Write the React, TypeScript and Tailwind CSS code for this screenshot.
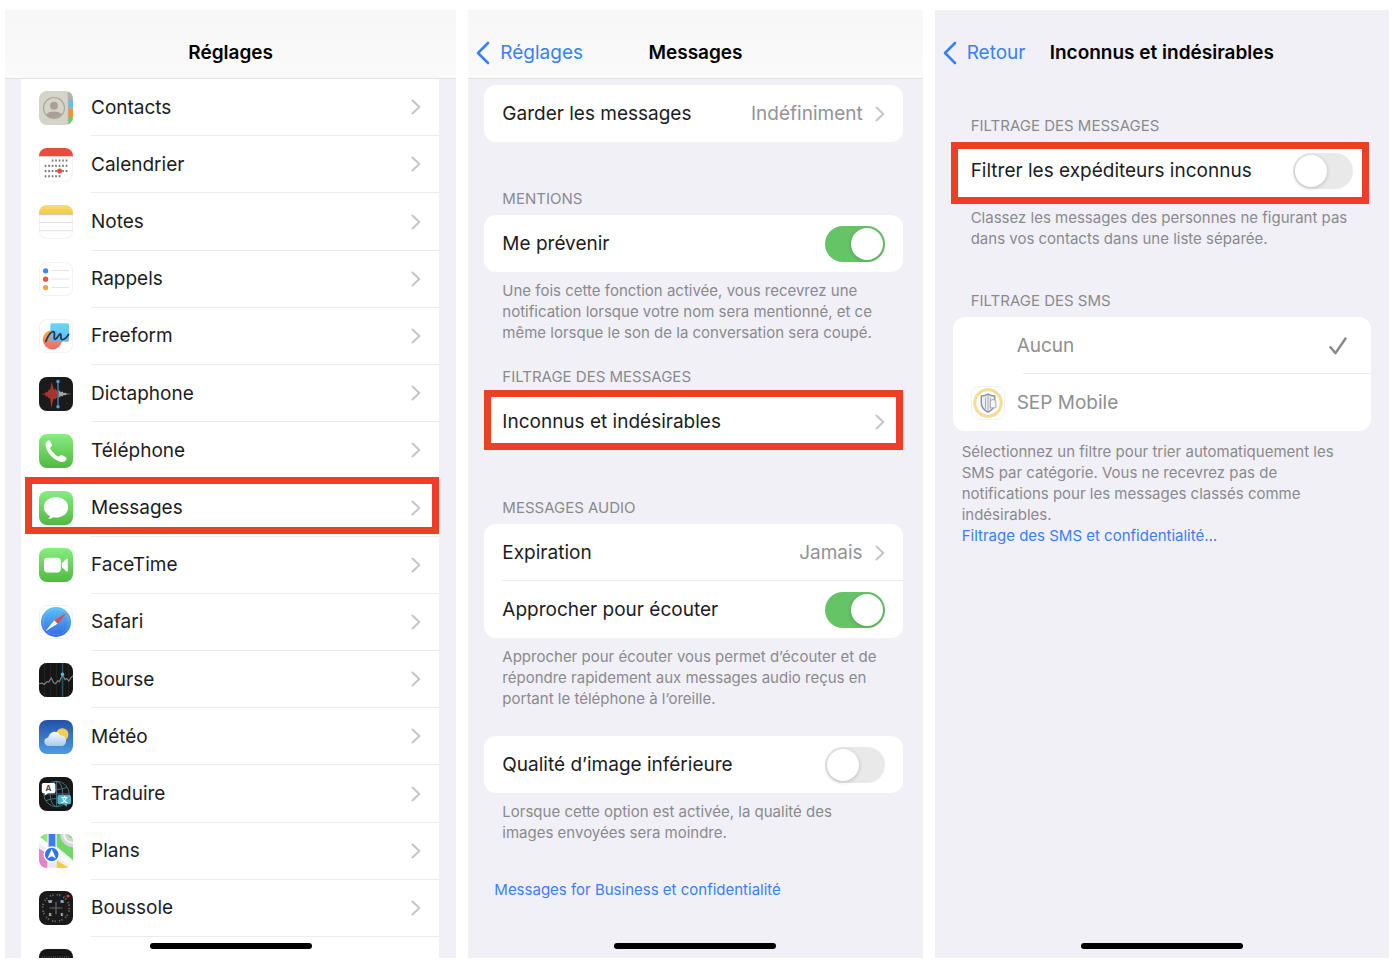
import type { ReactNode } from "react";

const squircle = "size-[34px] shrink-0 rounded-lg";
const lightIcon = "size-[34px] shrink-0 rounded-lg ring-1 ring-[#f3f3f5] ring-inset";

function ContactsIcon() {
  return (
    <svg viewBox="0 0 34 34" className={squircle} aria-hidden="true">
      <rect width="34" height="34" fill="#d4d4c9" />
      <rect x="29.5" width="4.5" height="9" fill="#b9b1a8" />
      <rect x="29.5" y="8.5" width="4.5" height="9" fill="#67bdf2" />
      <rect x="29.5" y="17.5" width="4.5" height="8.5" fill="#ee9430" />
      <rect x="29.5" y="26" width="4.5" height="8" fill="#62d365" />
      <path d="M29.3 0v34" stroke="#aaa69c" strokeWidth="0.8" />
      <circle cx="15" cy="17" r="10.5" fill="none" stroke="#aaa49d" strokeWidth="1.1" />
      <circle cx="15" cy="14.7" r="3.9" fill="#aaa098" />
      <path d="M7.3 23.6c1.6-2.2 4.4-3 7.7-3s6.1.8 7.7 3A10 10 0 0 1 15 27a10 10 0 0 1-7.7-3.4Z" fill="#aaa098" />
    </svg>
  );
}

function CalendarIcon() {
  const rows = [
    { y: 12.5, from: 13.5, count: 5 },
    { y: 17.8, from: 6.5, count: 7 },
    { y: 23, from: 6.5, count: 7 },
    { y: 28.2, from: 6.5, count: 5 },
  ];
  return (
    <svg viewBox="0 0 34 34" className={lightIcon} aria-hidden="true">
      <rect width="34" height="8.3" fill="#e94c3d" />
      {rows.map((row) =>
        Array.from({ length: row.count }, (_, i) => (
          <rect
            key={`${row.y}-${i}`}
            x={row.from + i * 3.5 - 0.8}
            y={row.y - 1}
            width="1.7"
            height="2.1"
            fill="#77777a"
          />
        ))
      )}
      <circle cx="20.6" cy="23" r="2.5" fill="#e94c3d" />
    </svg>
  );
}

function NotesIcon() {
  return (
    <svg viewBox="0 0 34 34" className={lightIcon} aria-hidden="true">
      <defs>
        <linearGradient id="notes" x1="0" y1="0" x2="0" y2="1">
          <stop stopColor="#f8de69" />
          <stop offset="1" stopColor="#f0cb3e" />
        </linearGradient>
      </defs>
      <rect width="34" height="9.3" fill="url(#notes)" />
      <path d="M0 9.7h34" stroke="#c9c3a8" strokeWidth="0.9" />
      <path d="M0 17.4h34M0 25.7h34" stroke="#dedee0" />
    </svg>
  );
}

function RemindersIcon() {
  return (
    <svg viewBox="0 0 34 34" className={lightIcon} aria-hidden="true">
      <circle cx="6.6" cy="8.8" r="2.6" fill="#3d87f5" />
      <circle cx="6.6" cy="17.2" r="2.6" fill="#eb5147" />
      <circle cx="6.6" cy="25.6" r="2.6" fill="#f0a33b" />
      <path d="M12.5 8.6h17.5M12.5 17h17.5M12.5 25.6h17.5" stroke="#e4e4e6" />
    </svg>
  );
}

function FreeformIcon() {
  return (
    <svg viewBox="0 0 34 34" className={lightIcon} aria-hidden="true">
      <defs>
        <linearGradient id="freeformCircle" x1="0" y1="0" x2="0" y2="1">
          <stop stopColor="#f5b03c" />
          <stop offset="1" stopColor="#ee6470" />
        </linearGradient>
        <linearGradient id="freeformSquare" x1="0" y1="0" x2="0" y2="1">
          <stop stopColor="#5fd4f6" />
          <stop offset="1" stopColor="#68b0ea" />
        </linearGradient>
      </defs>
      <circle cx="13.5" cy="20.7" r="9.7" fill="url(#freeformCircle)" />
      <rect x="11.3" y="4.3" width="18.7" height="18.5" rx="1.6" fill="url(#freeformSquare)" fillOpacity="0.94" />
      <path
        d="M6.8 22.5c2.2-5.6 5.4-9.8 7.6-9.8 2.5 0-.6 7.6 1.8 7.6 2 0 3.4-5.3 5-5.3 1.7 0-.4 5.6 2 5.6 2.3 0 4.8-2.4 6.4-5.2"
        fill="none"
        stroke="#1d3a5a"
        strokeWidth="1.8"
        strokeLinecap="round"
      />
    </svg>
  );
}

function VoiceMemosIcon() {
  return (
    <svg viewBox="0 0 34 34" className={squircle} aria-hidden="true">
      <rect width="34" height="34" fill="#1b1b1c" />
      <path
        d="m2 17 4-.6 1.5-2 1 1L10 12l1 1.5L12.5 5l1.3 4 1.2 4 1.5-1.5 2 3v5l-2 3-1.5-1.5-1.2 4-1.3 6L11 20.5 10 22l-1.5-3-1 1.2L6 17.8Z"
        fill="#a5352e"
      />
      <path d="m19.5 13 1.5 1.2 1 .8 1.5-.6 1 1.6 2-.2 1 .8 5 .4-5 .4-1 .8-2-.2-1 1.6-1.5-.6-1 .8-1.5 1.2Z" fill="#a3a3a4" />
      <path d="M19 4.5v25" stroke="#3a86bd" strokeWidth="1.4" />
      <circle cx="19" cy="4.5" r="1.7" fill="#4aa6e8" />
      <circle cx="19" cy="29.7" r="1.7" fill="#4aa6e8" />
    </svg>
  );
}

function GreenBackground({ id }: { id: string }) {
  return (
    <>
      <defs>
        <linearGradient id={id} x1="0" y1="0" x2="0" y2="1">
          <stop stopColor="#86ee7f" />
          <stop offset="1" stopColor="#52b843" />
        </linearGradient>
      </defs>
      <rect width="34" height="34" fill={`url(#${id})`} />
    </>
  );
}

function PhoneIcon() {
  return (
    <svg viewBox="0 0 34 34" className={squircle} aria-hidden="true">
      <GreenBackground id="phone" />
      <path
        d="M7.2 8.3c.9-1.3 2.2-2.2 3.1-1.9.8.3 2.7 3.6 2.7 4.7 0 1.3-1.9 2-1.8 3.2.2 1.8 5.8 7.7 7.9 8.2 1.4.2 1.9-1.7 3.3-1.6 1.2.1 4.8 2.2 5.1 3.3.3 1.2-1.3 3-3 3.600-3.300 1-8.500-1.800-12.200-5.500C8.600 18.600 5 11.800 7.200 8.300Z"
        fill="#fff"
      />
    </svg>
  );
}

function MessagesIcon() {
  return (
    <svg viewBox="0 0 34 34" className={squircle} aria-hidden="true">
      <GreenBackground id="messages" />
      <path
        d="M17 6c6.800 0 12.200 4.600 12.200 10.300S23.800 26.600 17 26.600c-1 0-2-.1-2.900-.3-1.300 1.100-3 1.700-4.900 1.700 1-.8 1.600-1.800 1.700-3-3.700-1.900-6.100-5.100-6.100-8.700C4.800 10.600 10.200 6 17 6Z"
        fill="#fff"
      />
    </svg>
  );
}

function FaceTimeIcon() {
  return (
    <svg viewBox="0 0 34 34" className={squircle} aria-hidden="true">
      <GreenBackground id="facetime" />
      <rect x="5" y="9.7" width="16.8" height="14.8" rx="3.4" fill="#fff" />
      <path d="M22.8 15.2 27.5 10.8q1.3-.8 1.3.8v11q0 1.6-1.3.8L22.8 19Z" fill="#fff" />
    </svg>
  );
}

function SafariIcon() {
  return (
    <svg viewBox="0 0 34 34" className={lightIcon} aria-hidden="true">
      <defs>
        <linearGradient id="safari" x1="0" y1="0" x2="0" y2="1">
          <stop stopColor="#5cc3f8" />
          <stop offset="1" stopColor="#3367e2" />
        </linearGradient>
      </defs>
      <circle cx="17" cy="17" r="15" fill="url(#safari)" />
      <circle cx="17" cy="17" r="13" fill="none" stroke="#fff" strokeOpacity="0.15" strokeWidth="1" />
      <path d="M27.8 7.8 15.3 15.2l3.2 3.6Z" fill="#e9493d" />
      <path d="m6.4 26.2 8.9-11 3.2 3.6Z" fill="#fff" />
    </svg>
  );
}

function StocksIcon() {
  return (
    <svg viewBox="0 0 34 34" className={squircle} aria-hidden="true">
      <rect width="34" height="34" fill="#161617" />
      <path d="M5.5 0v34M11.5 0v34M17.5 0v34M29.5 0v34" stroke="#222223" />
      <path d="M23.5 0v34" stroke="#24556a" strokeWidth="1.5" />
      <path
        d="m0 20.6 3-.4 2.5 1.2 2.2-2.8 2 .4 2.6-4 2.2 4.5 2 1.2 2.3-2.9 1.5 1 3.2-7 2.5 4.8 1.7-1 2.2 2.5 2-3.3 2.1-2"
        fill="none"
        stroke="#7e7e80"
        strokeWidth="1.2"
      />
      <circle cx="23.5" cy="11.2" r="1.7" fill="#4fc3e6" />
    </svg>
  );
}

function WeatherIcon() {
  return (
    <svg viewBox="0 0 34 34" className={squircle} aria-hidden="true">
      <defs>
        <linearGradient id="sky" x1="0" y1="0" x2="0" y2="1">
          <stop stopColor="#2452a8" />
          <stop offset="1" stopColor="#4e9be4" />
        </linearGradient>
        <linearGradient id="cloud" x1="0" y1="0" x2="0" y2="1">
          <stop stopColor="#fafcfe" />
          <stop offset="1" stopColor="#a6caee" />
        </linearGradient>
      </defs>
      <rect width="34" height="34" fill="url(#sky)" />
      <circle cx="23.3" cy="14.5" r="6.2" fill="#f4ce50" />
      <path
        d="M10 26c-2.7 0-4.7-1.8-4.7-4.2 0-2.3 1.7-4 4-4.2.7-3.5 3.1-5.9 6.3-5.9 2.7 0 4.7 1.5 5.7 3.9 3.4-.5 5.8 1.9 5.8 5.1 0 3-2 5.3-5 5.3Z"
        fill="url(#cloud)"
      />
    </svg>
  );
}

function TranslateIcon() {
  return (
    <svg viewBox="0 0 34 34" className={squircle} aria-hidden="true">
      <rect width="34" height="34" fill="#171718" />
      <g fill="none" stroke="#4b7784" strokeWidth="0.9">
        <circle cx="17.5" cy="17" r="12.7" />
        <ellipse cx="17.5" cy="17" rx="6.3" ry="12.7" />
        <path d="M17.5 4.3v25.4M4.8 17h25.4M7 10.2c6 3 15 3 21 0M7 23.800c6-3 15-3 21 0" />
      </g>
      <path d="M4.4 6h10.4q1.6 0 1.6 1.6v7q0 1.6-1.6 1.6H9L5.7 18.6V16.2H4.4q-1.6 0-1.6-1.6v-7Q2.8 6 4.4 6Z" fill="#fff" />
      <path d="M20 18h10.4q1.6 0 1.6 1.6v6q0 1.6-1.6 1.6h-2.2l-.7 2.6-2.6-2.6H20q-1.6 0-1.6-1.6v-6Q18.4 18 20 18Z" fill="#53b3cf" />
      <text x="9.5" y="14" fontSize="8" fontWeight="600" textAnchor="middle" fill="#333">A</text>
      <text x="25.2" y="25.2" fontSize="7" fontWeight="700" textAnchor="middle" fill="#fff" fontFamily="'Noto Sans CJK SC', sans-serif">文</text>
    </svg>
  );
}

function MapsIcon() {
  return (
    <svg viewBox="0 0 34 34" className={squircle} aria-hidden="true">
      <rect width="34" height="34" fill="#f0f0f2" />
      <path d="M0 4 8.5 9V0H0Z" fill="#8be67c" />
      <path d="M17.5 0H34v26L17.5 12.5Z" fill="#73d66b" />
      <path d="M21 0a14 14 0 0 0 13 13.5V0Z" fill="#d5d5d9" />
      <path d="M25 0a9 9 0 0 0 9 9" fill="none" stroke="#f5f5f6" strokeWidth="2" />
      <path d="M29 0a5 5 0 0 0 5 5V0Z" fill="#82dc76" />
      <path d="M0 14.5 8.5 20v14H0Z" fill="#e084c8" />
      <path d="M17.5 26 30 34H17.5Z" fill="#f5cb45" />
      <path d="M0 5.5 34 31" stroke="#fafafb" strokeWidth="5" />
      <rect x="8.5" width="9" height="34" fill="#e9e9ee" />
      <rect x="9.7" width="6.6" height="16" fill="#3b7cf0" />
      <circle cx="12.7" cy="20.5" r="7.5" fill="#2f74ef" stroke="#fff" strokeWidth="1.4" />
      <path d="m12.7 14.8 4.3 9.8-4.3-2.3-4.3 2.3Z" fill="#fff" />
    </svg>
  );
}

function CompassIcon() {
  return (
    <svg viewBox="0 0 34 34" className={squircle} aria-hidden="true">
      <rect width="34" height="34" fill="#1a1a1b" />
      <circle cx="17" cy="17" r="13.3" fill="none" stroke="#68686a" strokeWidth="2" strokeDasharray="1.2 1.3 1.2 3.3" />
      <path d="M17 10.8v12.4M10.8 17h12.4" stroke="#6a6a6c" strokeWidth="1.2" />
      <circle cx="29" cy="5" r="1.6" fill="#e5372c" />
      <g fontSize="4" fontWeight="700" fill="#e2e2e3" textAnchor="middle">
        <text x="11" y="12.3">W</text>
        <text x="23" y="12.3">N</text>
        <text x="11" y="24.8">S</text>
        <text x="23" y="24.8">E</text>
      </g>
    </svg>
  );
}

function MeasureIcon() {
  return (
    <svg viewBox="0 0 34 34" className={squircle} aria-hidden="true">
      <rect width="34" height="34" fill="#161617" />
      <path d="M3 8.2h28" stroke="#4b4b4d" strokeWidth="2.4" strokeDasharray="0.8 1.4" />
    </svg>
  );
}

function SepIcon() {
  return (
    <svg viewBox="0 0 34 34" className={lightIcon} aria-hidden="true">
      <circle cx="17" cy="17" r="13.2" fill="#fcfcfc" stroke="#f3dc94" strokeWidth="3" />
      <path d="M17 8.2c-2 1.2-4.2 1.8-6.7 1.9v7c0 4 2.4 6.9 6.7 9 4.3-2.1 6.7-5 6.7-9v-7c-2.5-.1-4.7-.7-6.7-1.9Z" fill="#eef0f3" stroke="#8c94a1" strokeWidth="1.5" />
      <path d="M14.5 11.5v11.5M17 9v16M19.3 11.5v11" stroke="#a4abb5" strokeWidth="1" />
      <path d="M19.3 16.5q0-3 2.8-3t2.8 3v5.3h-5.6Z" fill="#f7f7f8" stroke="#a4abb5" strokeWidth="1" />
    </svg>
  );
}

function Chevron() {
  return (
    <svg viewBox="0 0 10 16" className="h-4 w-2.5 shrink-0" fill="none" aria-hidden="true">
      <path d="m1.5 1.5 6.8 6.5-6.8 6.5" stroke="#c5c5c8" strokeWidth="2" strokeLinecap="round" strokeLinejoin="round" />
    </svg>
  );
}

function Highlight({ className }: { className: string }) {
  return (
    <div className={`pointer-events-none absolute border-[7px] border-[#ec3f26] ${className}`} />
  );
}

function Screen({ children }: { children: ReactNode }) {
  return (
    <section className="relative flex flex-col overflow-hidden bg-[#f1f0f6]">
      {children}
      <div className="absolute bottom-[9px] left-1/2 h-1.5 w-[162px] -translate-x-1/2 rounded-full bg-black" />
    </section>
  );
}

function TopBar({ title, back, plain }: { title: string; back?: string; plain?: boolean }) {
  return (
    <header
      className={`grid h-[69px] shrink-0 grid-cols-[1fr_auto_1fr] items-center border-b pt-[17px] ${
        plain ? "border-transparent" : "border-[#e2e2e5] bg-linear-to-b from-[#f7f7f7] to-[#fafafa]"
      }`}
    >
      <div>
        {back && (
          <a href="#" className="flex items-center gap-2.5 pl-2 text-[#3880f6]">
            <svg viewBox="0 0 14 24" className="h-6 w-3.5" fill="none" aria-hidden="true">
              <path d="M12 2 2 12l10 10" stroke="currentColor" strokeWidth="2.6" strokeLinecap="round" strokeLinejoin="round" />
            </svg>
            {back}
          </a>
        )}
      </div>
      <h1 className="font-semibold text-black">{title}</h1>
    </header>
  );
}

function GroupLabel({ children, className }: { children: ReactNode; className: string }) {
  return (
    <h2 className={`mb-1.5 px-[18px] text-[15px] leading-5 text-[#8a8a8e] ${className}`}>{children}</h2>
  );
}

function GroupNote({ children }: { children: ReactNode }) {
  return <p className="mt-2 px-[18px] text-[15px] leading-[21px] text-[#8a8a8e]">{children}</p>;
}

function Card({ children }: { children: ReactNode }) {
  return <div className="relative rounded-xl bg-white">{children}</div>;
}

function LinkRow({ label, value }: { label: string; value?: string }) {
  return (
    <a href="#" className="flex h-[57px] items-center px-[18px]">
      <span className="flex-1">{label}</span>
      {value && <span className="mr-3 text-[#939397]">{value}</span>}
      <Chevron />
    </a>
  );
}

function SwitchRow({ label, on }: { label: string; on?: boolean }) {
  return (
    <label className="flex h-[57px] items-center justify-between px-[18px]">
      {label}
      <input
        type="checkbox"
        role="switch"
        defaultChecked={on}
        className="flex h-9 w-[60px] shrink-0 appearance-none items-center rounded-full bg-[#e9e9ea] px-0.5 before:size-8 before:rounded-full before:bg-white before:shadow-[0_1px_4px_rgba(0,0,0,0.2)] checked:justify-end checked:bg-[#65c466]"
      />
    </label>
  );
}

function RadioRow({ label, icon, checked }: { label: string; icon?: ReactNode; checked?: boolean }) {
  return (
    <label className="flex h-[57px] items-center pr-6 pl-[18px] text-[#8f8f92]">
      <span className="mr-3 flex w-[34px] justify-center">{icon}</span>
      <span className="flex-1">{label}</span>
      <input type="radio" name="sms-filter" defaultChecked={checked} className="peer appearance-none" />
      <svg viewBox="0 0 18 18" className="invisible size-[18px] peer-checked:visible" fill="none" aria-hidden="true">
        <path d="m1.5 10.2 5 6L16.5 1.5" stroke="#87878a" strokeWidth="2.4" strokeLinecap="round" strokeLinejoin="round" />
      </svg>
    </label>
  );
}

const apps = [
  { name: "Contacts", icon: <ContactsIcon /> },
  { name: "Calendrier", icon: <CalendarIcon /> },
  { name: "Notes", icon: <NotesIcon /> },
  { name: "Rappels", icon: <RemindersIcon /> },
  { name: "Freeform", icon: <FreeformIcon /> },
  { name: "Dictaphone", icon: <VoiceMemosIcon /> },
  { name: "Téléphone", icon: <PhoneIcon /> },
  { name: "Messages", icon: <MessagesIcon />, highlighted: true },
  { name: "FaceTime", icon: <FaceTimeIcon /> },
  { name: "Safari", icon: <SafariIcon /> },
  { name: "Bourse", icon: <StocksIcon /> },
  { name: "Météo", icon: <WeatherIcon /> },
  { name: "Traduire", icon: <TranslateIcon /> },
  { name: "Plans", icon: <MapsIcon /> },
  { name: "Boussole", icon: <CompassIcon /> },
];

export default function App() {
  return (
    <main className="grid min-h-screen grid-cols-1 gap-3 bg-white py-2.5 pr-[11px] pl-[5px] font-['Inter',sans-serif] text-[19px] leading-[25px] text-[#1c1c1e] md:grid-cols-[451fr_454fr_454fr]">
      {/* Settings list */}
      <Screen>
        <TopBar title="Réglages" />
        <nav className="mr-[17px] ml-4 flex flex-1 flex-col bg-white">
          {apps.map((app) => (
            <a key={app.name} href="#" className="relative flex flex-1 items-center gap-[18px] pl-[18px]">
              {app.icon}
              <span className="flex flex-1 items-center justify-between self-stretch border-b border-[#ececee] pr-[18px]">
                {app.name}
                <Chevron />
              </span>
              {app.highlighted && <Highlight className="-top-0.5 right-0 bottom-[3px] left-1" />}
            </a>
          ))}
          {/* Next row, cut off by the bottom of the screen */}
          <div className="h-[21px] shrink-0 overflow-hidden pt-3 pl-[18px]">
            <MeasureIcon />
          </div>
        </nav>
      </Screen>

      {/* Messages settings */}
      <Screen>
        <TopBar title="Messages" back="Réglages" />
        <div className="flex-1 pt-1.5 pr-5 pl-4">
          <Card>
            <LinkRow label="Garder les messages" value="Indéfiniment" />
          </Card>

          <GroupLabel className="mt-[47px]">MENTIONS</GroupLabel>
          <Card>
            <SwitchRow label="Me prévenir" on />
          </Card>
          <GroupNote>
            Une fois cette fonction activée, vous recevrez une
            <br />
            notification lorsque votre nom sera mentionné, et ce
            <br />
            même lorsque le son de la conversation sera coupé.
          </GroupNote>

          <GroupLabel className="mt-6">FILTRAGE DES MESSAGES</GroupLabel>
          <Card>
            <LinkRow label="Inconnus et indésirables" />
            <Highlight className="inset-x-0 -top-[3px] bottom-0" />
          </Card>

          <GroupLabel className="mt-12">MESSAGES AUDIO</GroupLabel>
          <Card>
            <LinkRow label="Expiration" value="Jamais" />
            <hr className="-mt-px ml-[18px] border-[#ececee]" />
            <SwitchRow label="Approcher pour écouter" on />
          </Card>
          <GroupNote>
            Approcher pour écouter vous permet d’écouter et de
            <br />
            répondre rapidement aux messages audio reçus en
            <br />
            portant le téléphone à l’oreille.
          </GroupNote>

          <div className="mt-[27px]">
            <Card>
              <SwitchRow label="Qualité d’image inférieure" />
            </Card>
          </div>
          <GroupNote>
            Lorsque cette option est activée, la qualité des
            <br />
            images envoyées sera moindre.
          </GroupNote>

          <a href="#" className="mt-9 block px-2.5 text-[15px] leading-[21px] text-[#3880f6]">
            Messages for Business et confidentialité
          </a>
        </div>
      </Screen>

      {/* Unknown and spam filters */}
      <Screen>
        <TopBar title="Inconnus et indésirables" back="Retour" plain />
        <div className="flex-1 px-[18px]">
          <GroupLabel className="mt-[37px]">FILTRAGE DES MESSAGES</GroupLabel>
          <Card>
            <SwitchRow label="Filtrer les expéditeurs inconnus" />
            <Highlight className="top-0 right-0.5 -bottom-[5px] -left-0.5" />
          </Card>
          <GroupNote>
            Classez les messages des personnes ne figurant pas
            <br />
            dans vos contacts dans une liste séparée.
          </GroupNote>

          <GroupLabel className="mt-[42px]">FILTRAGE DES SMS</GroupLabel>
          <Card>
            <RadioRow label="Aucun" checked />
            <hr className="-mt-px ml-[70px] border-[#ececee]" />
            <RadioRow label="SEP Mobile" icon={<SepIcon />} />
          </Card>
          <p className="mt-2.5 px-[9px] text-[15px] leading-[21px] text-[#8a8a8e]">
            Sélectionnez un filtre pour trier automatiquement les
            <br />
            SMS par catégorie. Vous ne recevrez pas de
            <br />
            notifications pour les messages classés comme
            <br />
            indésirables.
            <br />
            <a href="#" className="text-[#3880f6]">
              Filtrage des SMS et confidentialité…
            </a>
          </p>
        </div>
      </Screen>
    </main>
  );
}
